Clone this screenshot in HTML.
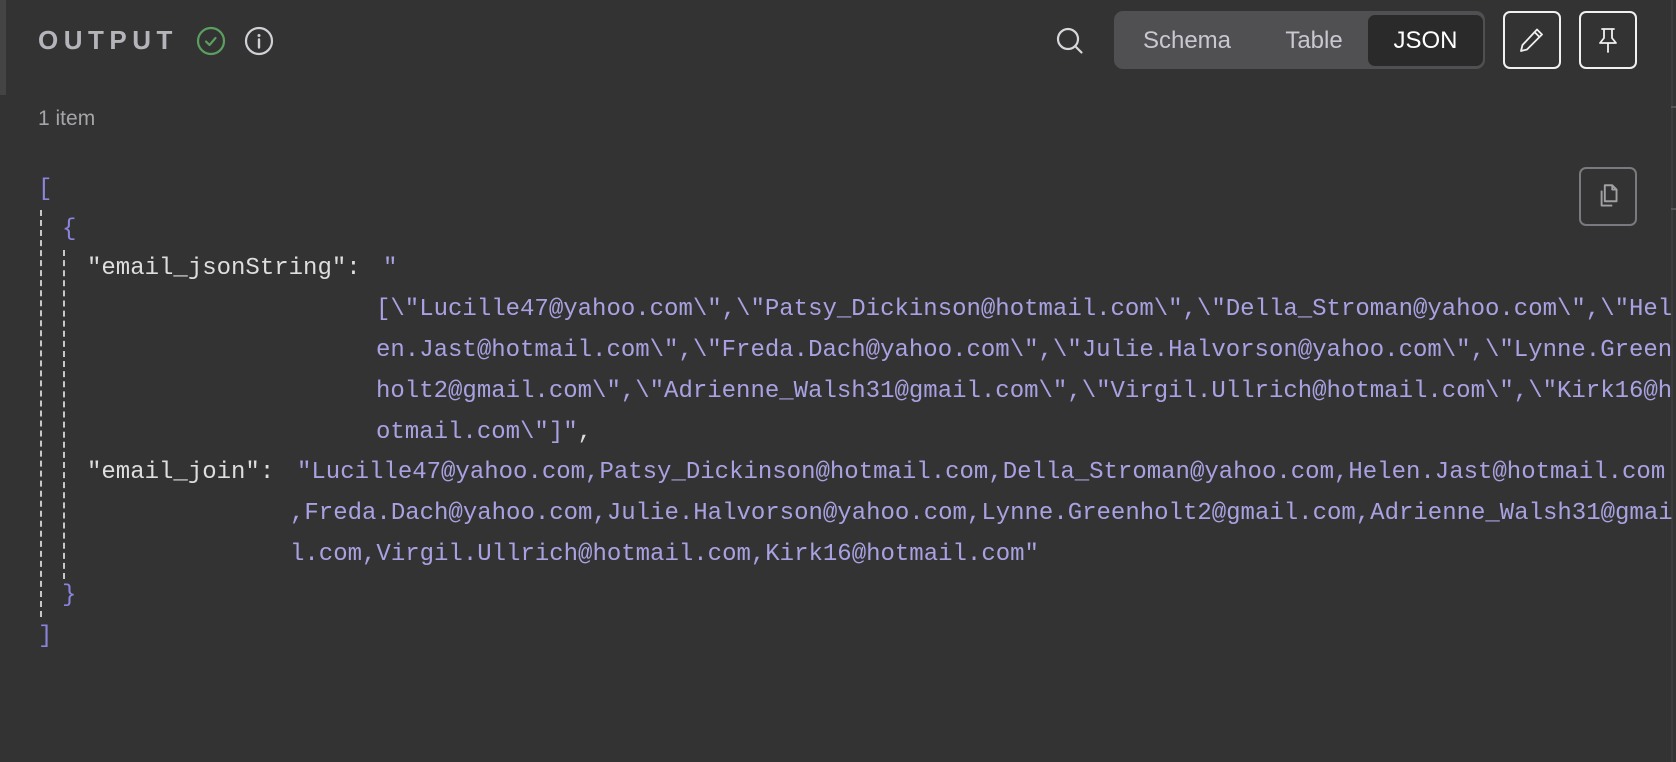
<!DOCTYPE html>
<html><head><meta charset="utf-8"><style>
html,body{margin:0;padding:0;}
body{width:1676px;height:762px;background:#333;position:relative;overflow:hidden;font-family:"Liberation Sans",sans-serif;}
.abs{position:absolute;}
.mono{font-family:"Liberation Mono",monospace;font-size:24px;white-space:pre;line-height:41px;}
.k{color:#dedede;}
.v{color:#a9a2e2;}
.b{color:#8a84dc;}
.btn{position:absolute;border:2px solid #f0f0f0;border-radius:7px;box-sizing:border-box;}
.q{margin-left:7px;}
</style></head><body>
<div class="abs" style="left:0;top:0;width:6px;height:95px;background:#444;"></div>
<div class="abs" style="left:1671px;top:0;width:2px;height:762px;background:#3c3c3c;"></div>
<div class="abs" style="left:1671px;top:106px;width:5px;height:2px;background:#555;"></div>
<div class="abs" style="left:1671px;top:208px;width:5px;height:2px;background:#555;"></div>

<div class="abs" style="left:38px;top:25px;font-size:26px;font-weight:bold;letter-spacing:5.5px;color:#b4b4ba;">OUTPUT</div>
<svg class="abs" style="left:196px;top:26px" width="30" height="30" viewBox="0 0 30 30"><circle cx="15" cy="15" r="13" fill="none" stroke="#5b9e60" stroke-width="2.2"/><path d="M10 15.5l3.5 3.5 6-7" fill="none" stroke="#5b9e60" stroke-width="2.2" stroke-linecap="round" stroke-linejoin="round"/></svg>
<svg class="abs" style="left:244px;top:26px" width="30" height="30" viewBox="0 0 30 30"><circle cx="15" cy="15" r="13" fill="none" stroke="#d0d0d5" stroke-width="2.2"/><circle cx="15" cy="9.5" r="1.5" fill="#d0d0d5"/><path d="M15 13.5v8" stroke="#d0d0d5" stroke-width="2.4" stroke-linecap="round"/></svg>

<svg class="abs" style="left:1055px;top:26px" width="30" height="30" viewBox="0 0 30 30"><circle cx="13" cy="13" r="10" fill="none" stroke="#d8d8dc" stroke-width="2.2"/><path d="M20.5 20.5l6 6" stroke="#d8d8dc" stroke-width="2.2" stroke-linecap="round"/></svg>

<div class="abs" style="left:1114px;top:11px;width:371px;height:58px;background:#505053;border-radius:9px;"></div>
<div class="abs" style="left:1368px;top:15px;width:115px;height:51px;background:#2a2a2a;border-radius:7px;"></div>
<div class="abs" style="left:1114px;top:27px;width:146px;text-align:center;font-size:24px;color:#c8c8d0;">Schema</div>
<div class="abs" style="left:1262px;top:27px;width:104px;text-align:center;font-size:24px;color:#c8c8d0;">Table</div>
<div class="abs" style="left:1368px;top:27px;width:115px;text-align:center;font-size:24px;color:#fff;">JSON</div>

<div class="btn" style="left:1503px;top:11px;width:58px;height:58px;"></div>
<svg class="abs" style="left:1518px;top:26px" width="28" height="28" viewBox="0 0 28 28"><path d="M19 3.5l5 5L9 23.5l-6 1.5 1.5-6z M16.5 6l5 5" fill="none" stroke="#f0f0f0" stroke-width="1.8" stroke-linejoin="round"/></svg>
<div class="btn" style="left:1579px;top:11px;width:58px;height:58px;"></div>
<svg class="abs" style="left:1594px;top:26px" width="28" height="30" viewBox="0 0 28 30"><path d="M8 3h12 M10 3v9l-4 5h16l-4-5V3 M14 17v9" fill="none" stroke="#f0f0f0" stroke-width="1.8" stroke-linejoin="round" stroke-linecap="round"/></svg>

<div class="abs" style="left:38px;top:107px;font-size:21px;color:#a5a5aa;">1 item</div>

<div class="btn" style="left:1579px;top:167px;width:58px;height:59px;border-color:#7a7a7e;"></div>
<svg class="abs" style="left:1593px;top:181px" width="30" height="32" viewBox="0 0 28 30"><path d="M11 4h7l4 4v11h-11z M18 4v4h4 M8 9v14h10" fill="none" stroke="#a0a0a5" stroke-width="1.8" stroke-linejoin="round"/></svg>

<div class="abs" style="left:40px;top:210px;height:407px;border-left:2px dashed #c8c8cc;"></div>
<div class="abs" style="left:63px;top:250px;height:329px;border-left:2px dashed #c8c8cc;"></div>

<div class="abs mono b" style="left:38px;top:169px;">[</div>
<div class="abs mono b" style="left:62px;top:209px;">{</div>
<div class="abs mono k" style="left:87px;top:248px;">"email_jsonString":</div>
<div class="abs mono v" style="left:376px;top:248px;"><span class="q">"</span>
[\"Lucille47@yahoo.com\",\"Patsy_Dickinson@hotmail.com\",\"Della_Stroman@yahoo.com\",\"Hel-
en.Jast@hotmail.com\",\"Freda.Dach@yahoo.com\",\"Julie.Halvorson@yahoo.com\",\"Lynne.Green
holt2@gmail.com\",\"Adrienne_Walsh31@gmail.com\",\"Virgil.Ullrich@hotmail.com\",\"Kirk16@h
otmail.com\"]"<span class="k">,</span></div>
<div class="abs mono k" style="left:87px;top:452px;">"email_join":</div>
<div class="abs mono v" style="left:290px;top:452px;"><span class="q">"Lucille47@yahoo.com,Patsy_Dickinson@hotmail.com,Della_Stroman@yahoo.com,Helen.Jast@hotmail.com</span>
,Freda.Dach@yahoo.com,Julie.Halvorson@yahoo.com,Lynne.Greenholt2@gmail.com,Adrienne_Walsh31@gmai
l.com,Virgil.Ullrich@hotmail.com,Kirk16@hotmail.com"</div>
<div class="abs mono b" style="left:62px;top:575px;">}</div>
<div class="abs mono b" style="left:38px;top:616px;">]</div>
</body></html>
